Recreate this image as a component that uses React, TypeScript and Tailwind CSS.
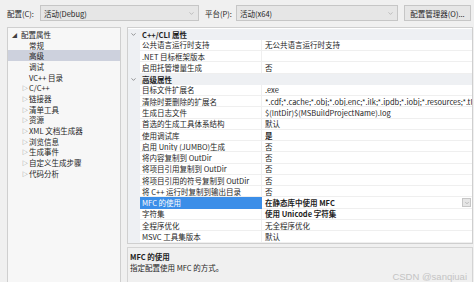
import { ChevronDown } from "lucide-react";

const font = "font-['Noto_Sans_CJK_SC','Noto_Sans',sans-serif]";

const tree = [
  { label: "常规" },
  { label: "高级", selected: true },
  { label: "调试" },
  { label: "VC++ 目录" },
  { label: "C/C++", arrow: true },
  { label: "链接器", arrow: true },
  { label: "清单工具", arrow: true },
  { label: "资源", arrow: true },
  { label: "XML 文档生成器", arrow: true },
  { label: "浏览信息", arrow: true },
  { label: "生成事件", arrow: true },
  { label: "自定义生成步骤", arrow: true },
  { label: "代码分析", arrow: true },
];

type Row = { name: string; value?: string; header?: boolean; bold?: boolean; selected?: boolean };

const rows: Row[] = [
  { name: "C++/CLI 属性", header: true },
  { name: "公共语言运行时支持", value: "无公共语言运行时支持" },
  { name: ".NET 目标框架版本", value: "" },
  { name: "启用托管增量生成", value: "否" },
  { name: "高级属性", header: true },
  { name: "目标文件扩展名", value: ".exe" },
  { name: "清除时要删除的扩展名", value: "*.cdf;*.cache;*.obj;*.obj.enc;*.ilk;*.ipdb;*.iobj;*.resources;*.tlb;*.tli;*.tlh" },
  { name: "生成日志文件", value: "$(IntDir)$(MSBuildProjectName).log" },
  { name: "首选的生成工具体系结构", value: "默认" },
  { name: "使用调试库", value: "是", bold: true },
  { name: "启用 Unity (JUMBO)生成", value: "否" },
  { name: "将内容复制到 OutDir", value: "否" },
  { name: "将项目引用复制到 OutDir", value: "否" },
  { name: "将项目引用的符号复制到 OutDir", value: "否" },
  { name: "将 C++ 运行时复制到输出目录", value: "否" },
  { name: "MFC 的使用", value: "在静态库中使用 MFC", bold: true, selected: true },
  { name: "字符集", value: "使用 Unicode 字符集", bold: true },
  { name: "全程序优化", value: "无全程序优化" },
  { name: "MSVC 工具集版本", value: "默认" },
];

function Combo({ text, width }: { text: string; width: string }) {
  return (
    <div className={`${width} h-[16px] flex items-center justify-between border border-[#c6c6c6] bg-[#e6e6e6] pl-[3px] pr-[3px]`}>
      <span>{text}</span>
      <ChevronDown size={7} strokeWidth={1.5} className="text-[#8a8a8a]" />
    </div>
  );
}

export default function App() {
  return (
    <div className={`w-[474px] h-[282px] overflow-hidden bg-[#f0f0f0] text-[7.5px] leading-[11px] text-[#1e1e1e] ${font}`}>
      <div className="flex items-center h-[27px] pl-[7px] pb-[1px]">
        <span className="w-[33px]">配置(C):</span>
        <Combo text="活动(Debug)" width="w-[159px]" />
        <span className="ml-[6px] w-[31px]">平台(P):</span>
        <Combo text="活动(x64)" width="w-[162px]" />
        <div className="ml-[6px] w-[67px] h-[16px] flex items-center justify-center border border-[#c6c6c6] bg-[#e6e6e6]">
          配置管理器(O)...
        </div>
      </div>

      <div className="flex pl-[7px] gap-[6px]">
        <div className="w-[114px] h-[260px] border border-[#cfcfcf] bg-[#f7f7f7] pt-[1px]">
          <div className="flex items-center h-[10.7px] pl-[4px]">
            <span className="text-[5px] w-[9px] text-[#404040]">◢</span>
            <span>配置属性</span>
          </div>
          {tree.map((t) => (
            <div
              key={t.label}
              className={`flex items-center h-[10.7px] ${t.selected ? "bg-[#cdd1dd]" : ""}`}
            >
              <span className="w-[21px] pl-[14px] text-[6px] text-[#707070]">{t.arrow ? "▷" : ""}</span>
              <span>{t.label}</span>
            </div>
          ))}
        </div>

        <div className="flex flex-col w-[346px]">
          <div className="h-[217px] border border-[#cfcfcf] bg-white pt-[0.5px] overflow-hidden">
            {rows.map((r) =>
              r.header ? (
                <div key={r.name} className="flex items-center h-[11.28px] bg-[#eef0f3] font-bold">
                  <ChevronDown size={7} strokeWidth={1.8} className="ml-[2px] mr-[5px] text-[#404040]" />
                  <span>{r.name}</span>
                </div>
              ) : (
                <div key={r.name} className="flex h-[11.28px] bg-[#eef0f3]">
                  <div
                    className={`w-[122px] ml-[12px] pl-[2px] flex items-center border-b border-r whitespace-nowrap overflow-hidden ${
                      r.selected
                        ? "bg-[#3b8ee8] text-white border-[#3b8ee8]"
                        : "bg-white border-[#efefef]"
                    }`}
                  >
                    {r.name}
                  </div>
                  <div className="flex-1 min-w-0 flex items-center justify-between bg-white border-b border-[#efefef] pl-[3px] overflow-hidden">
                    <span className={`whitespace-nowrap ${r.bold ? "font-bold" : ""}`}>{r.value}</span>
                    {r.selected && (
                      <div className="shrink-0 mr-[1px] w-[9px] h-[9px] flex items-center justify-center border border-[#c6c6c6] bg-[#e6e6e6]">
                        <ChevronDown size={6} strokeWidth={1.5} className="text-[#707070]" />
                      </div>
                    )}
                  </div>
                </div>
              )
            )}
          </div>
          <div className="mt-[3px] h-[40px] border border-[#d4d4d4] bg-[#f0f0f0] px-[2px] pt-[3px] flex flex-col">
            <span className="font-bold">MFC 的使用</span>
            <span>指定配置使用 MFC 的方式。</span>
            <span className="self-end -mt-[2px] mr-[3px] text-[9.5px] text-[#c4c4c4] font-['Liberation_Sans',sans-serif]">
              CSDN @sanqiuai
            </span>
          </div>
        </div>
      </div>
    </div>
  );
}
